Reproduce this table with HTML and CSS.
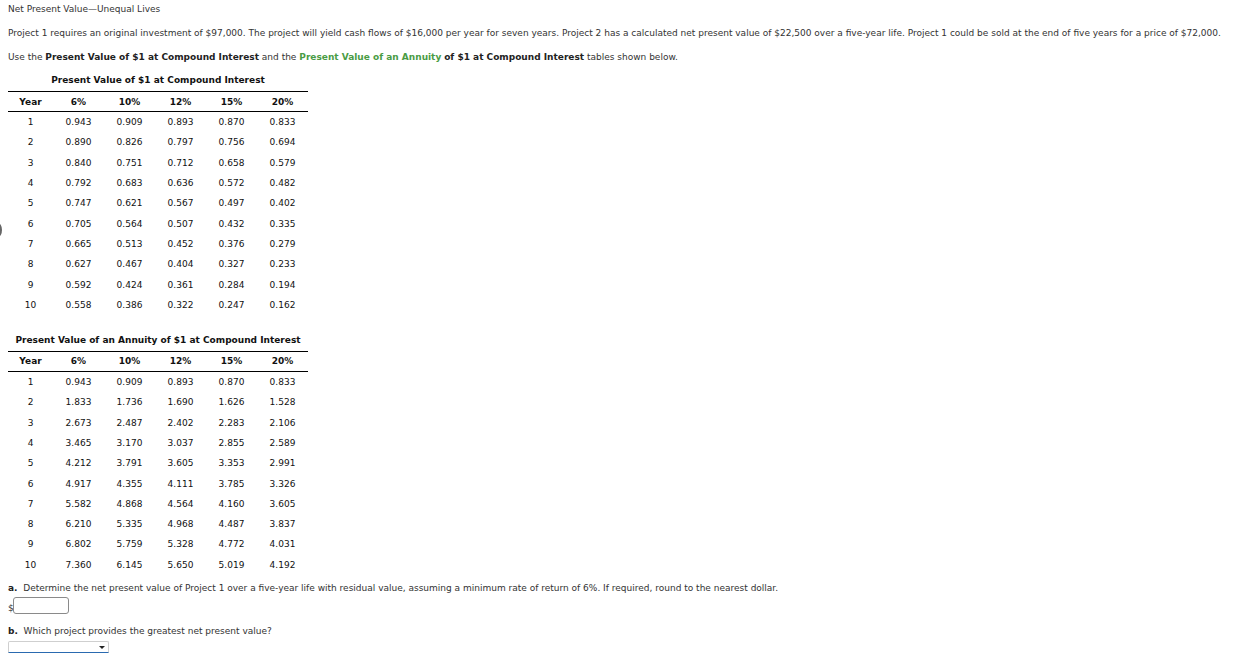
FILE: index.html
```html
<!DOCTYPE html>
<html>
<head>
<meta charset="utf-8">
<link rel="stylesheet" href="styles.css">
</head>
<body>
<div class="page">
  <p class="title">Net Present Value—Unequal Lives</p>
  <p class="para">Project 1 requires an original investment of $97,000. The project will yield cash flows of $16,000 per year for seven years. Project 2 has a calculated net present value of $22,500 over a five-year life. Project 1 could be sold at the end of five years for a price of $72,000.</p>
  <p class="para">Use the <b>Present Value of $1 at Compound Interest</b> and the <b class="green">Present Value of an Annuity</b> <b>of $1 at Compound Interest</b> tables shown below.</p>

  <table class="pv first">
    <caption>Present Value of $1 at Compound Interest</caption>
    <thead>
      <tr><th class="yr">Year</th><th>6%</th><th>10%</th><th>12%</th><th>15%</th><th>20%</th></tr>
    </thead>
    <tbody>
      <tr><td>1</td><td>0.943</td><td>0.909</td><td>0.893</td><td>0.870</td><td>0.833</td></tr>
      <tr><td>2</td><td>0.890</td><td>0.826</td><td>0.797</td><td>0.756</td><td>0.694</td></tr>
      <tr><td>3</td><td>0.840</td><td>0.751</td><td>0.712</td><td>0.658</td><td>0.579</td></tr>
      <tr><td>4</td><td>0.792</td><td>0.683</td><td>0.636</td><td>0.572</td><td>0.482</td></tr>
      <tr><td>5</td><td>0.747</td><td>0.621</td><td>0.567</td><td>0.497</td><td>0.402</td></tr>
      <tr><td>6</td><td>0.705</td><td>0.564</td><td>0.507</td><td>0.432</td><td>0.335</td></tr>
      <tr><td>7</td><td>0.665</td><td>0.513</td><td>0.452</td><td>0.376</td><td>0.279</td></tr>
      <tr><td>8</td><td>0.627</td><td>0.467</td><td>0.404</td><td>0.327</td><td>0.233</td></tr>
      <tr><td>9</td><td>0.592</td><td>0.424</td><td>0.361</td><td>0.284</td><td>0.194</td></tr>
      <tr><td>10</td><td>0.558</td><td>0.386</td><td>0.322</td><td>0.247</td><td>0.162</td></tr>
    </tbody>
  </table>

  <table class="pv second">
    <caption>Present Value of an Annuity of $1 at Compound Interest</caption>
    <thead>
      <tr><th class="yr">Year</th><th>6%</th><th>10%</th><th>12%</th><th>15%</th><th>20%</th></tr>
    </thead>
    <tbody>
      <tr><td>1</td><td>0.943</td><td>0.909</td><td>0.893</td><td>0.870</td><td>0.833</td></tr>
      <tr><td>2</td><td>1.833</td><td>1.736</td><td>1.690</td><td>1.626</td><td>1.528</td></tr>
      <tr><td>3</td><td>2.673</td><td>2.487</td><td>2.402</td><td>2.283</td><td>2.106</td></tr>
      <tr><td>4</td><td>3.465</td><td>3.170</td><td>3.037</td><td>2.855</td><td>2.589</td></tr>
      <tr><td>5</td><td>4.212</td><td>3.791</td><td>3.605</td><td>3.353</td><td>2.991</td></tr>
      <tr><td>6</td><td>4.917</td><td>4.355</td><td>4.111</td><td>3.785</td><td>3.326</td></tr>
      <tr><td>7</td><td>5.582</td><td>4.868</td><td>4.564</td><td>4.160</td><td>3.605</td></tr>
      <tr><td>8</td><td>6.210</td><td>5.335</td><td>4.968</td><td>4.487</td><td>3.837</td></tr>
      <tr><td>9</td><td>6.802</td><td>5.759</td><td>5.328</td><td>4.772</td><td>4.031</td></tr>
      <tr><td>10</td><td>7.360</td><td>6.145</td><td>5.650</td><td>5.019</td><td>4.192</td></tr>
    </tbody>
  </table>

  <p class="question qa"><b>a.</b>&nbsp; Determine the net present value of Project 1 over a five-year life with residual value, assuming a minimum rate of return of 6%. If required, round to the nearest dollar.</p>
  <div class="answer"><span class="dollar">$</span><span class="box"></span></div>

  <p class="question qb"><b>b.</b>&nbsp; Which project provides the greatest net present value?</p>
  <div class="select"><span class="arrow"></span></div>
</div>
<div class="edge"></div>
</body>
</html>
```

FILE: styles.css
```css
html, body {
  margin: 0;
  padding: 0;
  background: #fff;
}
body {
  font-family: "DejaVu Sans", Verdana, sans-serif;
  font-size: 9px;
  color: #333;
  position: relative;
  overflow: hidden;
}
.page {
  padding: 3px 8px 0 8px;
}
p {
  margin: 0;
  line-height: 12px;
}
.title {
  margin-bottom: 12px;
}
.para {
  margin-bottom: 12px;
}
.para + .para {
  margin-bottom: 11px;
}
b {
  font-weight: bold;
  color: #222;
}
b.green {
  color: #4a9c45;
}
.pv {
  border-collapse: collapse;
  width: 300px;
  table-layout: fixed;
  color: #111;
}
.pv caption {
  font-weight: bold;
  line-height: 12px;
  padding-bottom: 5px;
  color: #111;
}
.pv thead tr {
  border-top: 1px solid #000;
  border-bottom: 1px solid #000;
}
.pv th {
  font-weight: bold;
  height: 19px;
  padding: 0;
  text-align: center;
  width: 51px;
}
.pv th.yr {
  width: 45px;
}
.pv td {
  height: 20.3px;
  padding: 0;
  text-align: center;
}
.first {
  margin-bottom: 19px;
}
.qa {
  margin-top: 7px;
}
.answer {
  display: flex;
  align-items: flex-end;
  height: 17px;
  margin-top: 3px;
}
.dollar {
  line-height: 12px;
  width: 5px;
  overflow: hidden;
  color: #333;
}
.box {
  display: block;
  width: 54px;
  height: 15px;
  border: 1px solid #8a8a8a;
  border-radius: 3px;
}
.qb {
  margin-top: 11px;
}
.select {
  position: relative;
  width: 99px;
  height: 10px;
  margin-top: 4px;
  border: 1px solid #cfcfcf;
  border-bottom: 1px solid #2a6ab0;
  border-radius: 2px 2px 0 0;
}
.select .arrow {
  position: absolute;
  right: 3px;
  top: 4px;
  width: 0;
  height: 0;
  border-left: 3px solid transparent;
  border-right: 3px solid transparent;
  border-top: 3px solid #222;
}
.edge {
  position: absolute;
  left: -6px;
  top: 223px;
  width: 8px;
  height: 14px;
  border-radius: 50%;
  background: #666;
}
```
